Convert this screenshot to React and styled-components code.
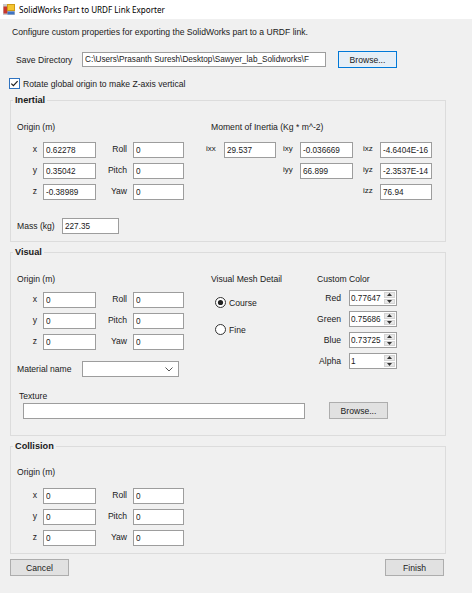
import React from "react";
import styled, { createGlobalStyle } from "styled-components";

const GlobalStyle = createGlobalStyle`
  html, body {
    margin: 0;
    padding: 0;
    background: #fff;
  }
  body {
    font-family: "Liberation Sans", Arial, sans-serif;
    font-size: 8.6px;
    color: #1a1a1a;
  }
  * {
    box-sizing: border-box;
  }
`;

const Window = styled.div`
  width: 474px;
  height: 594px;
  display: flex;
  flex-direction: column;
  background: #fff;
  overflow: hidden;
`;

const TitleBar = styled.div`
  height: 19px;
  flex: none;
  display: flex;
  align-items: center;
  gap: 4px;
  padding-left: 3px;
  font-family: "Noto Sans", "Open Sans", sans-serif;
  font-size: 8.1px;
  color: #000;
`;

const Form = styled.div`
  width: 472px;
  height: 574px;
  flex: none;
  background: #f0f0f0;
  display: flex;
  flex-direction: column;
  padding: 8px 0 0 10px;
`;

const Description = styled.div`
  line-height: 10px;
  margin-left: 2px;
`;

const SaveRow = styled.div`
  display: flex;
  align-items: center;
  height: 17px;
  margin: 14px 0 0 6px;
`;

const FieldLabel = styled.span`
  flex: none;
  width: ${(p) => p.$w}px;
  line-height: 10px;
  white-space: nowrap;
`;

const TextBox = styled.input`
  flex: none;
  width: ${(p) => p.$w}px;
  height: ${(p) => p.$h || 16}px;
  margin-left: ${(p) => p.$ml || 0}px;
  border: 1px solid #9d9d9d;
  background: #fff;
  padding: 0 1px 0 2px;
  font-family: inherit;
  font-size: 8.2px;
  color: #1a1a1a;
  outline: none;
`;

const Button = styled.button`
  flex: none;
  width: 59px;
  height: 17px;
  margin-left: ${(p) => p.$ml || 0}px;
  padding: 0;
  border: 1px solid ${(p) => (p.$focused ? "#0078d7" : "#adadad")};
  box-shadow: ${(p) => (p.$focused ? "inset 0 0 0 1px #e5f1fb" : "none")};
  background: ${(p) => (p.$focused ? "#e5eef6" : "#e1e1e1")};
  font: inherit;
  color: #1a1a1a;
`;

const CheckRow = styled.label`
  display: flex;
  align-items: center;
  gap: 3px;
  height: 11px;
  margin: 10px 0 0 -1px;
  line-height: 10px;
`;

const Group = styled.fieldset`
  width: 436px;
  min-width: 0;
  margin: ${(p) => p.$mt}px 0 0 0;
  padding: 0;
  border: 1px solid #dcdcdc;
`;

const Legend = styled.legend`
  margin-left: 2px;
  padding: 0 2px;
  font-weight: bold;
  font-size: 9.2px;
  line-height: 10px;
`;

const GroupBody = styled.div`
  padding: ${(p) => p.$pt}px 0 ${(p) => p.$pb}px 6px;
`;

const Columns = styled.div`
  display: flex;
  align-items: flex-start;
`;

const Pane = styled.div`
  flex: none;
  width: ${(p) => (p.$w ? `${p.$w}px` : "auto")};
  margin-left: ${(p) => p.$ml || 0}px;
`;

const SectionHeader = styled.div`
  line-height: 10px;
  padding-left: ${(p) => p.$pl || 0}px;
  margin-bottom: ${(p) => p.$mb}px;
  white-space: nowrap;
`;

const OriginGrid = styled.div`
  display: grid;
  grid-template-columns: 20px 53px 25px 51px;
  grid-auto-rows: 16px;
  column-gap: 6px;
  row-gap: 5px;
  align-items: center;
`;

const AxisLabel = styled.span`
  text-align: right;
  line-height: 10px;
  padding-bottom: 2px;
`;

const Row = styled.div`
  display: flex;
  align-items: center;
  height: ${(p) => p.$h || 16}px;
  margin-top: ${(p) => p.$mt || 0}px;
`;

const InertiaGrid = styled.div`
  display: grid;
  grid-template-columns: 18px 52px 24px 53px 27px 52px;
  grid-auto-rows: 16px;
  row-gap: 5px;
  align-items: center;
`;

const InertiaLabel = styled.span`
  grid-row: ${(p) => p.$row};
  grid-column: ${(p) => p.$col};
  padding-left: ${(p) => p.$pl || 0}px;
  padding-bottom: 3px;
  line-height: 10px;
  font-size: 8px;
`;

const InertiaCell = styled(TextBox)`
  grid-row: ${(p) => p.$row};
  grid-column: ${(p) => p.$col};
`;

const RadioRow = styled.label`
  display: flex;
  align-items: center;
  gap: 3px;
  height: 11px;
  margin: ${(p) => p.$mt || 0}px 0 0 4px;
  line-height: 10px;
`;

const ColorGrid = styled.div`
  display: grid;
  grid-template-columns: 24px 48px;
  grid-auto-rows: 16px;
  column-gap: 8px;
  row-gap: 5px;
  align-items: center;
`;

const ColorLabel = styled.span`
  text-align: right;
  line-height: 10px;
  padding-bottom: 1px;
`;

const Numeric = styled.div`
  display: flex;
  width: 48px;
  height: 16px;
  border: 1px solid #9d9d9d;
  background: #fff;
`;

const NumericInput = styled.input`
  flex: 1;
  min-width: 0;
  border: none;
  padding: 0 0 0 1px;
  font-family: inherit;
  font-size: 8.2px;
  color: #1a1a1a;
  background: transparent;
  outline: none;
`;

const Spin = styled.div`
  flex: none;
  width: 13px;
  display: flex;
  flex-direction: column;
  gap: 1px;
  padding: 1px;
`;

const SpinButton = styled.div`
  flex: 1;
  display: flex;
  align-items: center;
  justify-content: center;
  background: #e8e8e8;
  border: 1px solid #d4d4d4;
`;

const Combo = styled.div`
  flex: none;
  display: flex;
  align-items: center;
  justify-content: flex-end;
  width: 97px;
  height: 16px;
  padding-right: 5px;
  border: 1px solid #9d9d9d;
  background: #fff;
`;

const TextureLabel = styled.div`
  line-height: 10px;
  margin: 14px 0 0 2px;
`;

const ButtonRow = styled.div`
  display: flex;
  justify-content: space-between;
  width: 434px;
  margin-top: 5px;
`;

const AppIcon = () => (
  <svg width="12" height="11" viewBox="0 0 12 11">
    <rect x="0" y="0" width="12" height="11" fill="#c9c9c9" />
    <rect x="0.5" y="2.5" width="4" height="7" fill="#c8372d" />
    <rect x="4.5" y="0.5" width="7" height="6" fill="#f4c430" stroke="#cf9b16" />
    <rect x="4.5" y="7.5" width="7" height="3" fill="#3f74c4" />
  </svg>
);

const CheckIcon = () => (
  <svg width="11" height="11" viewBox="0 0 11 11">
    <rect x="0.5" y="0.5" width="10" height="10" fill="#fff" stroke="#2f73c0" />
    <polyline points="2.3,5.6 4.4,7.7 8.6,3.2" fill="none" stroke="#1e1e1e" strokeWidth="1.2" />
  </svg>
);

const RadioIcon = ({ on }) => (
  <svg width="11" height="11" viewBox="0 0 11 11">
    <circle cx="5.5" cy="5.5" r="5" fill="#fff" stroke="#333" />
    {on && <circle cx="5.5" cy="5.5" r="2.6" fill="#222" />}
  </svg>
);

const Chevron = () => (
  <svg width="8" height="5" viewBox="0 0 8 5">
    <polyline points="0.5,0.5 4,4 7.5,0.5" fill="none" stroke="#555" />
  </svg>
);

const Arrow = ({ up }) => (
  <svg width="5" height="3" viewBox="0 0 5 3">
    <polygon points={up ? "2.5,0 5,3 0,3" : "0,0 5,0 2.5,3"} fill="#333" />
  </svg>
);

const OriginFields = ({ values }) => (
  <OriginGrid>
    <AxisLabel>x</AxisLabel>
    <TextBox $w={53} defaultValue={values[0]} />
    <AxisLabel>Roll</AxisLabel>
    <TextBox $w={51} defaultValue="0" />
    <AxisLabel>y</AxisLabel>
    <TextBox $w={53} defaultValue={values[1]} />
    <AxisLabel>Pitch</AxisLabel>
    <TextBox $w={51} defaultValue="0" />
    <AxisLabel>z</AxisLabel>
    <TextBox $w={53} defaultValue={values[2]} />
    <AxisLabel>Yaw</AxisLabel>
    <TextBox $w={51} defaultValue="0" />
  </OriginGrid>
);

const inertia = [
  { label: "ixx", value: "29.537", row: 1, col: 1 },
  { label: "ixy", value: "-0.036669", row: 1, col: 3, pl: 7 },
  { label: "ixz", value: "-4.6404E-16", row: 1, col: 5, pl: 10 },
  { label: "iyy", value: "66.899", row: 2, col: 3, pl: 7 },
  { label: "iyz", value: "-2.3537E-14", row: 2, col: 5, pl: 10 },
  { label: "izz", value: "76.94", row: 3, col: 5, pl: 10 },
];

const colors = [
  { label: "Red", value: "0.77647" },
  { label: "Green", value: "0.75686" },
  { label: "Blue", value: "0.73725" },
  { label: "Alpha", value: "1" },
];

export default function App() {
  return (
    <>
      <GlobalStyle />
      <Window>
        <TitleBar>
          <AppIcon />
          <span>SolidWorks Part to URDF Link Exporter</span>
        </TitleBar>
        <Form>
          <Description>
            Configure custom properties for exporting the SolidWorks part to a URDF link.
          </Description>
          <SaveRow>
            <FieldLabel $w={66}>Save Directory</FieldLabel>
            <TextBox
              $w={244}
              $h={15}
              defaultValue="C:\Users\Prasanth Suresh\Desktop\Sawyer_lab_Solidworks\F"
            />
            <Button $ml={12} $focused>
              Browse...
            </Button>
          </SaveRow>
          <CheckRow>
            <CheckIcon />
            Rotate global origin to make Z-axis vertical
          </CheckRow>

          <Group $mt={6}>
            <Legend>Inertial</Legend>
            <GroupBody $pt={17} $pb={7}>
              <Columns>
                <Pane $w={167}>
                  <SectionHeader $mb={10}>Origin (m)</SectionHeader>
                  <OriginFields values={["0.62278", "0.35042", "-0.38989"]} />
                  <Row $mt={18}>
                    <FieldLabel $w={45}>Mass (kg)</FieldLabel>
                    <TextBox $w={57} defaultValue="227.35" />
                  </Row>
                </Pane>
                <Pane $ml={22}>
                  <SectionHeader $mb={10} $pl={5}>
                    Moment of Inertia (Kg * m^-2)
                  </SectionHeader>
                  <InertiaGrid>
                    {inertia.map((c) => (
                      <React.Fragment key={c.label}>
                        <InertiaLabel $row={c.row} $col={c.col} $pl={c.pl}>
                          {c.label}
                        </InertiaLabel>
                        <InertiaCell
                          $row={c.row}
                          $col={c.col + 1}
                          $w={c.col === 3 ? 53 : 52}
                          defaultValue={c.value}
                        />
                      </React.Fragment>
                    ))}
                  </InertiaGrid>
                </Pane>
              </Columns>
            </GroupBody>
          </Group>

          <Group $mt={5}>
            <Legend>Visual</Legend>
            <GroupBody $pt={17} $pb={16}>
              <Columns>
                <Pane $w={167}>
                  <SectionHeader $mb={8}>Origin (m)</SectionHeader>
                  <OriginFields values={["0", "0", "0"]} />
                  <Row $mt={11}>
                    <FieldLabel $w={65}>Material name</FieldLabel>
                    <Combo>
                      <Chevron />
                    </Combo>
                  </Row>
                </Pane>
                <Pane $w={106} $ml={27}>
                  <SectionHeader $mb={13}>Visual Mesh Detail</SectionHeader>
                  <RadioRow>
                    <RadioIcon on />
                    Course
                  </RadioRow>
                  <RadioRow $mt={16}>
                    <RadioIcon />
                    Fine
                  </RadioRow>
                </Pane>
                <Pane>
                  <SectionHeader $mb={6}>Custom Color</SectionHeader>
                  <ColorGrid>
                    {colors.map((c) => (
                      <React.Fragment key={c.label}>
                        <ColorLabel>{c.label}</ColorLabel>
                        <Numeric>
                          <NumericInput defaultValue={c.value} />
                          <Spin>
                            <SpinButton>
                              <Arrow up />
                            </SpinButton>
                            <SpinButton>
                              <Arrow />
                            </SpinButton>
                          </Spin>
                        </Numeric>
                      </React.Fragment>
                    ))}
                  </ColorGrid>
                </Pane>
              </Columns>
              <TextureLabel>Texture</TextureLabel>
              <Row $h={17} $mt={1}>
                <TextBox $w={282} $ml={6} defaultValue="" />
                <Button $ml={24}>Browse...</Button>
              </Row>
            </GroupBody>
          </Group>

          <Group $mt={5}>
            <Legend>Collision</Legend>
            <GroupBody $pt={16} $pb={7}>
              <SectionHeader $mb={11}>Origin (m)</SectionHeader>
              <Pane $w={167}>
                <OriginFields values={["0", "0", "0"]} />
              </Pane>
            </GroupBody>
          </Group>

          <ButtonRow>
            <Button>Cancel</Button>
            <Button>Finish</Button>
          </ButtonRow>
        </Form>
      </Window>
    </>
  );
}
